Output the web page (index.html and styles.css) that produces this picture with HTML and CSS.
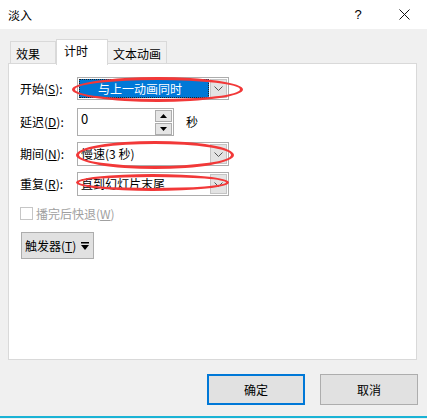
FILE: index.html
```html
<!DOCTYPE html>
<html lang="zh-CN">
<head>
    <meta charset="UTF-8">
    <title>淡入</title>
    <link rel="stylesheet" href="styles.css">
</head>
<body>
<div class="window">
    <div class="titlebar">
        <span class="title">淡入</span>
        <div class="caption-btns">
            <span class="caption-btn">?</span>
            <span class="caption-btn">
                <svg width="11" height="11" viewBox="0 0 11 11"><path d="M0.5 0.5 L10.5 10.5 M10.5 0.5 L0.5 10.5" stroke="#111" stroke-width="1"/></svg>
            </span>
        </div>
    </div>

    <div class="tabs">
        <div class="tab">效果</div>
        <div class="tab active">计时</div>
        <div class="tab">文本动画</div>
    </div>

    <div class="panel">
        <div class="row row-start">
            <span class="label">开始(<u>S</u>):</span>
            <div class="combo">
                <div class="combo-value selected">与上一动画同时</div>
                <div class="drop">
                    <svg width="9" height="5" viewBox="0 0 9 5"><polyline points="0.5,0.5 4.5,4.5 8.5,0.5" fill="none" stroke="#555" stroke-width="1"/></svg>
                </div>
            </div>
        </div>

        <div class="row row-delay">
            <span class="label">延迟(<u>D</u>):</span>
            <div class="spin">
                <div class="spin-field">0</div>
                <div class="spin-btns">
                    <div class="spin-btn">
                        <svg width="7" height="4" viewBox="0 0 7 4"><polygon points="3.5,0 7,4 0,4" fill="#000"/></svg>
                    </div>
                    <div class="spin-btn">
                        <svg width="7" height="4" viewBox="0 0 7 4"><polygon points="0,0 7,0 3.5,4" fill="#000"/></svg>
                    </div>
                </div>
            </div>
            <span class="unit">秒</span>
        </div>

        <div class="row row-combo">
            <span class="label">期间(<u>N</u>):</span>
            <div class="combo">
                <div class="combo-value">慢速(3 秒)</div>
                <div class="drop">
                    <svg width="9" height="5" viewBox="0 0 9 5"><polyline points="0.5,0.5 4.5,4.5 8.5,0.5" fill="none" stroke="#555" stroke-width="1"/></svg>
                </div>
            </div>
        </div>

        <div class="row row-combo">
            <span class="label">重复(<u>R</u>):</span>
            <div class="combo">
                <div class="combo-value">直到幻灯片末尾</div>
                <div class="drop">
                    <svg width="9" height="5" viewBox="0 0 9 5"><polyline points="0.5,0.5 4.5,4.5 8.5,0.5" fill="none" stroke="#555" stroke-width="1"/></svg>
                </div>
            </div>
        </div>

        <div class="check-row">
            <span class="checkbox"></span>
            <span class="check-label">播完后快退(<u>W</u>)</span>
        </div>

        <div class="trigger">
            <span>触发器(<u>T</u>)</span>
            <svg width="8" height="8" viewBox="0 0 8 8"><rect x="0" y="0" width="8" height="1.5" fill="#000"/><polygon points="0,3 8,3 4,8" fill="#000"/></svg>
        </div>
    </div>

    <div class="actions">
        <div class="btn default">确定</div>
        <div class="btn">取消</div>
    </div>

    <!-- red annotation rings drawn over the controls -->
    <div class="ring ring-1"></div>
    <div class="ring ring-2"></div>
    <div class="ring ring-3"></div>
</div>
</body>
</html>
```

FILE: styles.css
```css
html, body {
    margin: 0;
    padding: 0;
}

body {
    font-family: "Noto Sans CJK SC", "Noto Sans", sans-serif;
    font-size: 12px;
    color: #000;
    background-color: #f0f0f0;
}

.window {
    position: relative;
    width: 427px;
    height: 418px;
    box-sizing: border-box;
    background-color: #f0f0f0;
    border-bottom: 2px solid #1ab3d5;
    overflow: hidden;
}

u {
    text-decoration: underline;
    text-underline-offset: 1px;
}

/* title bar */
.titlebar {
    display: flex;
    align-items: center;
    height: 29px;
    background-color: #fff;
    padding-left: 8px;
}

.title {
    flex: 1;
    line-height: 14px;
    font-size: 12px;
}

.caption-btns {
    display: flex;
    height: 29px;
}

.caption-btn {
    width: 46px;
    display: flex;
    align-items: center;
    justify-content: center;
    font-family: "Liberation Sans", sans-serif;
    font-size: 13px;
}

/* tabs */
.tabs {
    display: flex;
    align-items: flex-end;
    margin: 10px 0 0 10px;
}

.tab {
    height: 22px;
    box-sizing: border-box;
    border: 1px solid #d9d9d9;
    border-bottom: none;
    background-color: #f0f0f0;
    padding: 0 5px;
    line-height: 21px;
    padding-top: 1px;
}

.tab + .tab {
    border-left: none;
}

.tab:first-child {
    width: 46px;
}

.tab.active {
    position: relative;
    z-index: 1;
    height: 26px;
    width: 52px;
    margin-bottom: -2px;
    background-color: #fff;
    padding: 0 0 0 7px;
    line-height: 22px;
    border-left: 1px solid #d9d9d9;
}

.tab.active + .tab {
    border-left: none;
}

/* panel */
.panel {
    margin-left: 8px;
    width: 409px;
    height: 297px;
    box-sizing: border-box;
    border: 1px solid #d9d9d9;
    background-color: #fff;
    padding: 13px 0 0 11px;
}

.row {
    display: flex;
    align-items: center;
}

.label {
    width: 57px;
    line-height: 14px;
}

.row-start {
    height: 23px;
}

.row-delay {
    height: 28px;
    margin-top: 8px;
}

.row-combo {
    height: 24px;
    margin-top: 6px;
}

.combo {
    display: flex;
    width: 152px;
    height: 100%;
    box-sizing: border-box;
    border: 1px solid #adadad;
    padding: 1px;
    background-color: #fff;
}

.combo-value {
    flex: 1;
    padding-left: 2px;
    line-height: 20px;
}

.combo-value.selected {
    margin-right: 1px;
    background-color: #0078d7;
    color: #fff;
    text-align: center;
    border: 1px dotted #222;
    line-height: 17px;
    padding-left: 0;
    padding-right: 8px;
}

.drop {
    width: 17px;
    box-sizing: border-box;
    border: 1px solid #c4c4c4;
    background-color: #e3e3e3;
    display: flex;
    align-items: center;
    justify-content: center;
}

/* spinner */
.spin {
    display: flex;
    width: 97px;
    height: 100%;
    box-sizing: border-box;
    border: 1px solid #adadad;
    padding: 0 1px 0 0;
}

.spin-field {
    flex: 1;
    padding: 2px 0 0 3px;
    font-size: 13px;
    line-height: 15px;
}

.spin-btns {
    display: flex;
    flex-direction: column;
    justify-content: center;
    gap: 1px;
    width: 17px;
}

.spin-btn {
    height: 12px;
    box-sizing: border-box;
    border: 1px solid #adadad;
    background-color: #e5e5e5;
    display: flex;
    align-items: center;
    justify-content: center;
}

.unit {
    margin-left: 12px;
    line-height: 14px;
}

/* checkbox */
.check-row {
    display: flex;
    align-items: center;
    height: 13px;
    margin-top: 11px;
}

.checkbox {
    width: 13px;
    height: 13px;
    box-sizing: border-box;
    border: 1px solid #c6c6c6;
    background-color: #fff;
}

.check-label {
    margin-left: 3px;
    color: #a0a0a0;
    line-height: 14px;
}

/* trigger button */
.trigger {
    display: flex;
    align-items: center;
    gap: 5px;
    width: 73px;
    height: 27px;
    box-sizing: border-box;
    margin: 12px 0 0 1px;
    padding-left: 3px;
    border: 1px solid #adadad;
    background-color: #e1e1e1;
    line-height: 14px;
}

/* dialog buttons */
.actions {
    display: flex;
    justify-content: flex-end;
    gap: 15px;
    margin: 14px 9px 0 0;
}

.btn {
    width: 98px;
    height: 31px;
    box-sizing: border-box;
    border: 1px solid #adadad;
    background-color: #e1e1e1;
    display: flex;
    align-items: center;
    justify-content: center;
}

.btn.default {
    border: 2px solid #0078d7;
}

/* annotation rings */
.ring {
    position: absolute;
    border: 3px solid #f23838;
    border-radius: 50%;
    box-sizing: border-box;
}

.ring-1 {
    left: 72px;
    top: 77px;
    width: 171px;
    height: 25px;
}

.ring-2 {
    left: 76px;
    top: 141px;
    width: 158px;
    height: 28px;
}

.ring-3 {
    left: 76px;
    top: 174px;
    width: 153px;
    height: 17px;
}
```
